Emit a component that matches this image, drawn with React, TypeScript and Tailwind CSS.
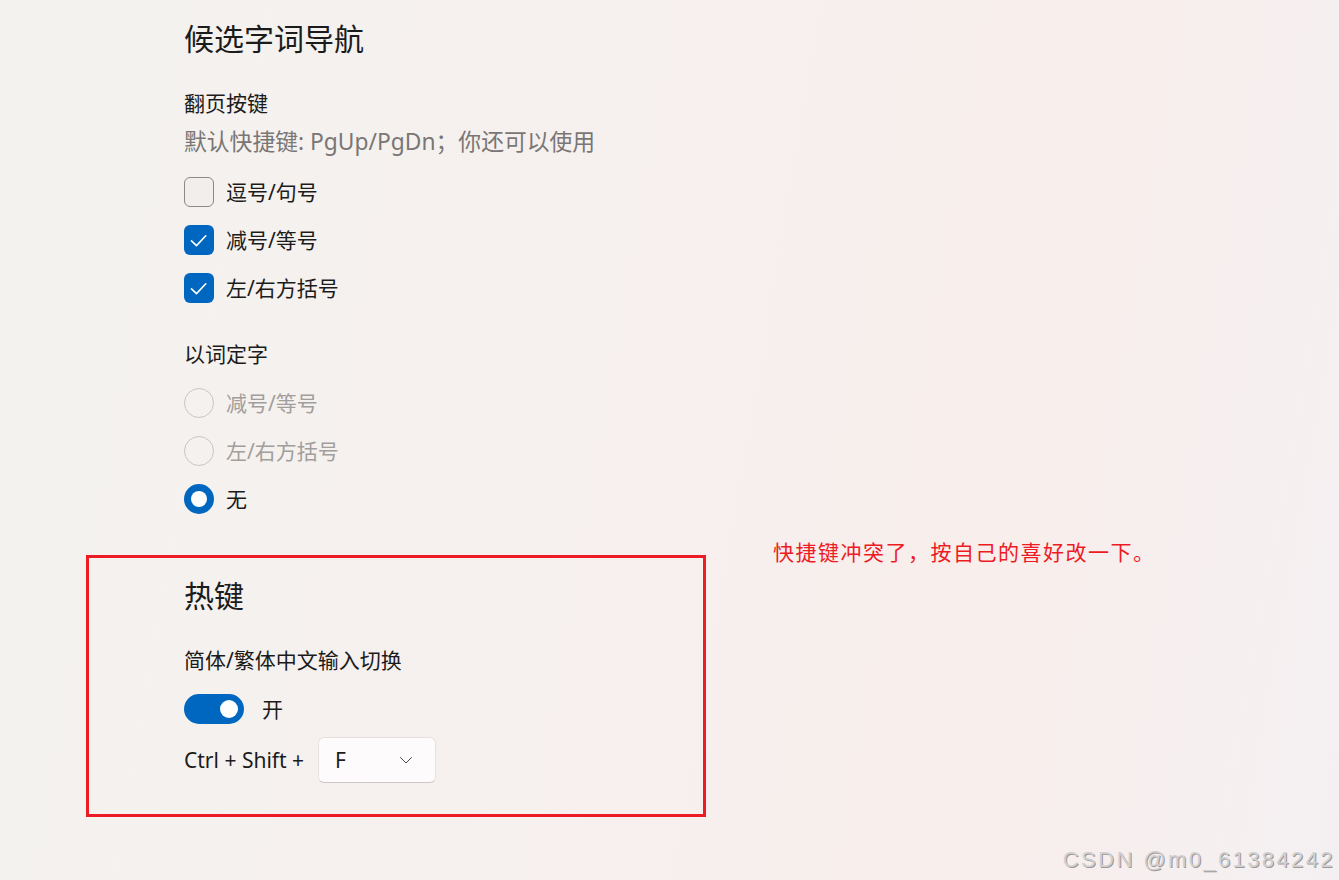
import React, { useState } from "react";

// Windows 11 IME settings page (candidate navigation + hotkey), 150% scale
const font = { fontFamily: '"Noto Sans", "Noto Sans CJK SC", sans-serif' };

const CheckRow = ({ label, checked, onToggle }: { label: string; checked: boolean; onToggle: () => void }) => (
  <div className="flex h-[48px] items-center gap-[12px] cursor-pointer" onClick={onToggle}>
    {checked ? (
      <span className="h-[30px] w-[30px] rounded-[6px] bg-[#0067c0]">
        <svg width="30" height="30" viewBox="0 0 30 30" fill="none">
          <path d="M7.5 15.8 L12.5 20.6 L21.8 10.8" stroke="#ffffff" strokeWidth="1.6" strokeLinecap="round" strokeLinejoin="round" />
        </svg>
      </span>
    ) : (
      <span className="h-[30px] w-[30px] rounded-[6px] border-[1.5px] border-[#8b8886] bg-[#f1eeec]"></span>
    )}
    <span className="text-[21px] leading-none text-[#1b1b1b]">{label}</span>
  </div>
);

const RadioRow = ({ label, selected, disabled, onPick }: { label: string; selected: boolean; disabled?: boolean; onPick: () => void }) => (
  <div className="flex h-[48px] items-center gap-[12px]" onClick={disabled ? undefined : onPick}>
    {selected ? (
      <span className="flex h-[30px] w-[30px] items-center justify-center rounded-full bg-[#0067c0]">
        <span className="h-[16px] w-[16px] rounded-full bg-white"></span>
      </span>
    ) : (
      <span className={`h-[30px] w-[30px] rounded-full border-[1.5px] ${disabled ? "border-[#c9c5c3]" : "border-[#8b8886]"}`}></span>
    )}
    <span className={`text-[21px] leading-none ${disabled ? "text-[#a29e9c]" : "text-[#1b1b1b]"}`}>{label}</span>
  </div>
);

export default function App() {
  const [pageKeys, setPageKeys] = useState({ comma: false, minus: true, bracket: true });
  const [wordPick, setWordPick] = useState("none");
  const [hotkeyOn, setHotkeyOn] = useState(true);

  return (
    <div
      style={font}
      className="relative h-[880px] w-full overflow-hidden bg-[linear-gradient(100deg,#f3f2ef_0%,#f6f0ee_45%,#f8eeec_75%,#f4f0f2_100%)] text-[#1b1b1b]"
    >
      <div className="flex flex-col pt-[19px]">
        <div className="pl-[184px]">
          <div className="flex h-[40px] items-center text-[30px] leading-none">候选字词导航</div>

          <div className="mt-[29px] flex h-[30px] items-center text-[21px] leading-none">翻页按键</div>
          <div className="mt-[9px] flex h-[30px] items-center text-[22.8px] leading-none text-[#797675]">
            默认快捷键: PgUp/PgDn；你还可以使用
          </div>

          <div className="mt-[11px] flex flex-col">
            <CheckRow label="逗号/句号" checked={pageKeys.comma} onToggle={() => setPageKeys({ ...pageKeys, comma: !pageKeys.comma })} />
            <CheckRow label="减号/等号" checked={pageKeys.minus} onToggle={() => setPageKeys({ ...pageKeys, minus: !pageKeys.minus })} />
            <CheckRow label="左/右方括号" checked={pageKeys.bracket} onToggle={() => setPageKeys({ ...pageKeys, bracket: !pageKeys.bracket })} />
          </div>

          <div className="mt-[27px] flex h-[30px] items-center text-[21px] leading-none">以词定字</div>
          <div className="mt-[10px] flex flex-col">
            <RadioRow label="减号/等号" selected={wordPick === "minus"} disabled onPick={() => setWordPick("minus")} />
            <RadioRow label="左/右方括号" selected={wordPick === "bracket"} disabled onPick={() => setWordPick("bracket")} />
            <RadioRow label="无" selected={wordPick === "none"} onPick={() => setWordPick("none")} />
          </div>
        </div>

        <div className="mt-[32px] flex items-start">
          {/* hotkey section, highlighted with a red box */}
          <div className="ml-[86px] h-[262px] w-[620px] border-[3px] border-[#ed1c24] pl-[95px] pt-[18px]">
            <div className="flex h-[40px] items-center text-[30px] leading-none">热键</div>
            <div className="mt-[29px] flex h-[30px] items-center text-[21px] leading-none">简体/繁体中文输入切换</div>

            <div className="mt-[19px] flex h-[30px] items-center gap-[18px]">
              <button
                onClick={() => setHotkeyOn(!hotkeyOn)}
                className={`flex h-[30px] w-[60px] items-center rounded-full px-[6px] ${
                  hotkeyOn ? "justify-end bg-[#0067c0]" : "justify-start border-[1.5px] border-[#8b8886]"
                }`}
              >
                <span className={`h-[18px] w-[18px] rounded-full ${hotkeyOn ? "bg-white" : "bg-[#5d5a58]"}`}></span>
              </button>
              <span className="text-[21px] leading-none">{hotkeyOn ? "开" : "关"}</span>
            </div>

            <div className="mt-[13px] flex h-[46px] items-center gap-[14px]">
              <span className="text-[21px] leading-none">Ctrl + Shift +</span>
              <div className="flex h-[46px] w-[118px] items-center justify-between rounded-[6px] border border-[#e6e1e0] border-b-[#cdc8c7] bg-[#fdfbfb] pl-[16px] pr-[22px]">
                <span className="text-[21px] leading-none">F</span>
                <svg width="14" height="14" viewBox="0 0 14 14" fill="none">
                  <path d="M1.5 4.5 L7 10 L12.5 4.5" stroke="#4a4847" strokeWidth="1" strokeLinecap="round" strokeLinejoin="round" />
                </svg>
              </div>
            </div>
          </div>

          <div
            className="ml-[67px] mt-[-19px] text-[21px] leading-[30px] tracking-[1.5px] text-[#ed1c24]"
            style={{ fontFamily: '"Noto Sans CJK SC", sans-serif' }}
          >
            快捷键冲突了，按自己的喜好改一下。
          </div>
        </div>
      </div>

      {/* watermark */}
      <div
        className="absolute bottom-[9px] right-[4px] text-[22px] leading-none tracking-[2.4px] text-[#d2d0d0] [text-shadow:1px_1px_0_#9a9898]"
        style={{ fontFamily: '"Liberation Sans", Arial, sans-serif' }}
      >
        CSDN @m0_61384242
      </div>
    </div>
  );
}
